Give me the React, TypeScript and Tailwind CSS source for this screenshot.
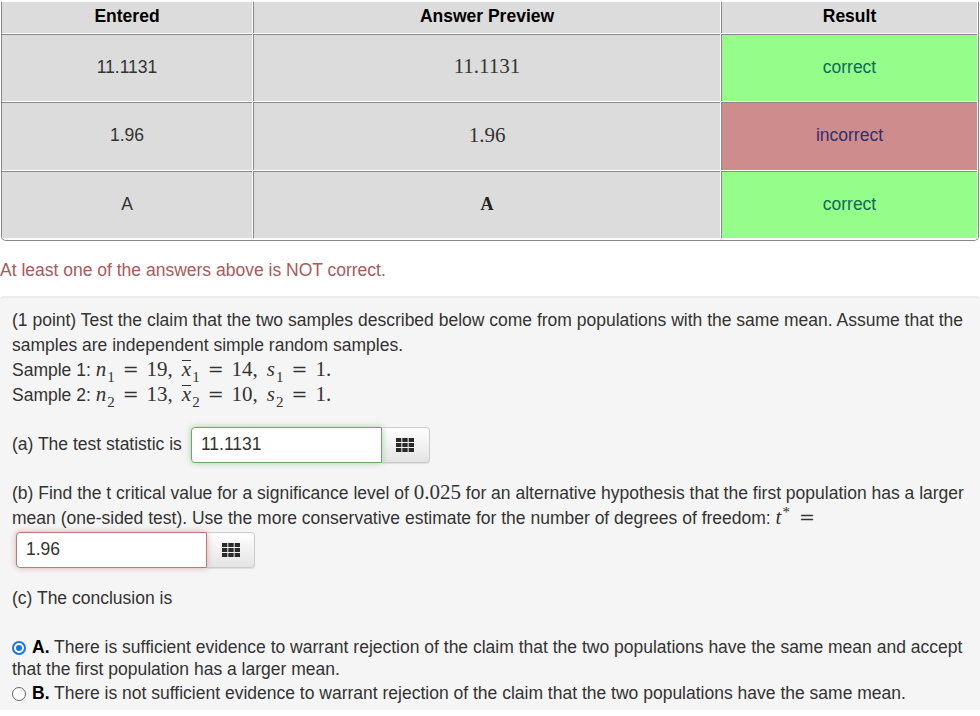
const SERIF = "font-['Liberation_Serif',serif] text-[21px]";

function Sub({ children }: { children: string }) {
  return <sub className="ml-[1px] text-[15px] not-italic leading-[0] align-[-2px]">{children}</sub>;
}

function Eq({ className = "mx-[8px]" }: { className?: string }) {
  return <span className={`font-['DejaVu_Serif',serif] text-[19px] leading-[0] ${className}`}>=</span>;
}

function SampleLine({ n, a, b }: { n: string; a: string; b: string }) {
  return (
    <div className="h-[25px] pb-[2px] leading-[23px]">
      Sample {n}:{" "}
      <span className={SERIF}>
        <i>n</i>
        <Sub>{n}</Sub>
        <Eq />
        {a},<span className="ml-[9px]" />
        <span className="relative inline-block leading-[0]">
          <i>x</i>
          <span className="absolute left-0 right-0 top-[-9px] h-px bg-[#333]" />
        </span>
        <Sub>{n}</Sub>
        <Eq />
        {b},<span className="ml-[9px]" />
        <i>s</i>
        <Sub>{n}</Sub>
        <Eq />
        1.
      </span>
    </div>
  );
}

function GridIcon() {
  return (
    <svg width="18" height="15" viewBox="0 0 18 15" fill="#2a2a2a">
      {[0, 5, 10].map((y) =>
        [0, 6.33, 12.67].map((x) => (
          <rect key={`${x}-${y}`} x={x} y={y} width="5.33" height="4" />
        ))
      )}
    </svg>
  );
}

function AnswerInput({ value, tone }: { value: string; tone: "good" | "bad" }) {
  const ring =
    tone === "good"
      ? "border-[#6fa56f] shadow-[0_0_6px_#a3d0a3]"
      : "border-[#b97a7a] shadow-[0_0_6px_#e0a8a8]";
  return (
    <span className="inline-flex h-[36px] align-middle">
      <span
        className={`relative z-10 flex h-full w-[191px] items-center rounded-l-[4px] border bg-white pb-px pl-[9px] text-[#333] ${ring}`}
      >
        {value}
      </span>
      <span className="flex h-full w-[48px] items-center justify-center rounded-r-[4px] border border-l-0 border-[#ccc] bg-gradient-to-b from-white to-[#e4e4e4] shadow-[0_1px_1px_#ddd]">
        <GridIcon />
      </span>
    </span>
  );
}

function Radio({ checked }: { checked?: boolean }) {
  return checked ? (
    <span className="mr-[6px] inline-block h-[14px] w-[14px] rounded-full border-2 border-[#1a73e8] bg-white p-[2px] align-[-2px]">
      <span className="block h-full w-full rounded-full bg-[#1a73e8]" />
    </span>
  ) : (
    <span className="mr-[6px] inline-block h-[14px] w-[14px] rounded-full border border-[#666] bg-white align-[-2px]" />
  );
}

const CELL = "flex items-center justify-center border-t border-[#888] bg-[#dcdcdc] pb-[2px]";
const HEAD = "flex items-center justify-center bg-[#dcdcdc] pb-[2px] font-bold text-black";

const rows = [
  { entered: "11.1131", preview: "11.1131", result: "correct", ok: true, mono: false },
  { entered: "1.96", preview: "1.96", result: "incorrect", ok: false, mono: false },
  { entered: "A", preview: "A", result: "correct", ok: true, mono: true },
];

export default function App() {
  return (
    <div className="h-[716px] w-[980px] overflow-hidden bg-white pt-[2px] font-['Liberation_Sans',Arial,sans-serif] text-[17.5px] text-[#333]">
      <div className="ml-px w-[978px] overflow-hidden rounded-b-[5px] border border-t-0 border-[#888] pb-[2px] pr-px">
        <div className="grid grid-cols-[250px_467px_256px] grid-rows-[31px_67px_68px_67px] gap-px bg-white text-center">
          <div className={HEAD}>Entered</div>
          <div className={`${HEAD} border-l border-[#888]`}>Answer Preview</div>
          <div className={`${HEAD} border-l border-[#888]`}>Result</div>
          {rows.map((r, i) => (
            <div key={i} className="contents">
              <div className={CELL}>{r.entered}</div>
              <div
                className={`${CELL} border-l ${r.mono ? "font-['Liberation_Serif',serif] text-[18px] font-bold text-[#222]" : SERIF}`}
              >
                {r.preview}
              </div>
              <div
                className={`flex items-center justify-center border-l border-t border-[#888] pb-[2px] ${r.ok ? "bg-[#95fd8a] text-[#0f6a58]" : "bg-[#cf8c8c] text-[#2f3070]"}`}
              >
                {r.result}
              </div>
            </div>
          ))}
        </div>
      </div>

      <div className="mt-[18px] h-[22px] leading-[22px] text-[#a9595b]">At least one of the answers above is NOT correct.</div>

      <div className="mt-[15px] h-[414px] w-[980px] rounded-t-[4px] border-t-2 border-[#eaeaea] bg-[#f5f5f5] px-[12px] pt-[10px]">
        <div className="leading-[25px]">
          (1 point) Test the claim that the two samples described below come from populations with the same mean. Assume that the samples are independent simple random samples.
        </div>
        <SampleLine n="1" a="19" b="14" />
        <SampleLine n="2" a="13" b="10" />

        <div className="mt-[19px] flex items-center gap-[9px]">
          <span className="pb-[2px]">(a) The test statistic is</span>
          <AnswerInput value="11.1131" tone="good" />
        </div>

        <div className="mt-[18px] leading-[25px]">
          (b) Find the t critical value for a significance level of <span className={`${SERIF} leading-[0]`}>0.025</span> for an alternative hypothesis that the first population has a larger mean (one-sided test). Use the more conservative estimate for the number of degrees of freedom:{" "}
          <span className={`${SERIF} leading-[0]`}>
            <i>t</i>
            <sup className="ml-px text-[15px] leading-[0]">*</sup>
            <Eq className="ml-[9px]" />
          </span>
        </div>
        <div className="mt-px pl-[4px]">
          <AnswerInput value="1.96" tone="bad" />
        </div>

        <div className="mt-[18px] leading-[25px]">(c) The conclusion is</div>

        <div className="mt-[25px] leading-[22px]">
          <Radio checked />
          <b className="text-black">A.</b> There is sufficient evidence to warrant rejection of the claim that the two populations have the same mean and accept that the first population has a larger mean.
        </div>
        <div className="mt-[2px] leading-[23px]">
          <Radio />
          <b className="text-black">B.</b> There is not sufficient evidence to warrant rejection of the claim that the two populations have the same mean.
        </div>
      </div>
    </div>
  );
}
